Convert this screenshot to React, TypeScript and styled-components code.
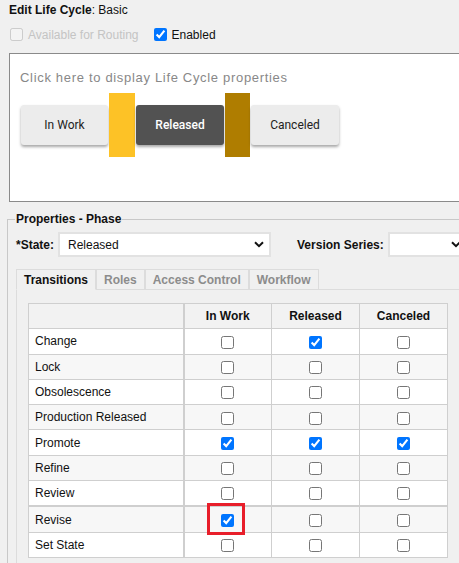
import styled, { createGlobalStyle } from "styled-components";

const GlobalStyle = createGlobalStyle`
  html, body {
    margin: 0;
    padding: 0;
    background: #f0f0f0;
    overflow: hidden;
  }
  body {
    font-family: "Liberation Sans", Arial, sans-serif;
    font-size: 12px;
    color: #111;
  }
`;

const Page = styled.div`
  width: 459px;
  height: 563px;
  overflow: hidden;
`;

const Title = styled.div`
  margin: 3px 0 0 9px;
  line-height: 14px;
  b {
    font-weight: bold;
  }
`;

const OptionsRow = styled.div`
  display: flex;
  align-items: center;
  margin: 10px 0 0 10px;
  height: 15px;
`;

const Check = styled.input.attrs({ type: "checkbox" })`
  width: 13px;
  height: 13px;
  margin: 0;
`;

const OptionLabel = styled.label<{ disabled?: boolean }>`
  display: flex;
  align-items: center;
  gap: 5px;
  margin-right: 15px;
  color: ${(p) => (p.disabled ? "#c4c4c4" : "#111")};
`;

const Panel = styled.div`
  margin: 11px 0 0 9px;
  width: 480px;
  height: 149px;
  background: #fff;
  border: 1px solid #8a8a8a;
  padding: 16px 0 0 10px;
  box-sizing: border-box;
`;

const Hint = styled.div`
  font-size: 13px;
  letter-spacing: 0.68px;
  line-height: 15px;
  color: #888;
`;

const Flow = styled.div`
  display: flex;
  align-items: center;
  margin: 8px 0 0 1px;
  gap: 1px;
`;

const StateButton = styled.div<{ active?: boolean }>`
  width: 88px;
  height: 40px;
  display: flex;
  align-items: center;
  justify-content: center;
  border-radius: 3px;
  font-family: Roboto, "Liberation Sans", sans-serif;
  font-size: 12px;
  font-weight: ${(p) => (p.active ? 500 : 400)};
  background: ${(p) => (p.active ? "#525252" : "#ececec")};
  color: ${(p) => (p.active ? "#fff" : "#222")};
  box-shadow: 0 2px 3px rgba(0, 0, 0, 0.35);
`;

const Connector = styled.div<{ color: string }>`
  width: 26px;
  height: 64px;
  background: ${(p) => p.color};
`;

const Fieldset = styled.fieldset`
  margin: 10px 0 0 7px;
  width: 480px;
  height: 400px;
  border: 1px solid #c8c8c8;
  border-right: none;
  padding: 6px 0 0 8px;
  box-sizing: border-box;
  legend {
    font-weight: bold;
    padding: 0 1px;
    margin-left: -1px;
    line-height: 14px;
  }
`;

const FieldRow = styled.div`
  display: flex;
  align-items: center;
  height: 25px;
  white-space: nowrap;
`;

const FieldLabel = styled.span`
  font-weight: bold;
  margin-right: 4px;
  flex-shrink: 0;
`;

const SelectWrap = styled.div<{ width: number }>`
  position: relative;
  width: ${(p) => p.width}px;
  height: 25px;
  margin-right: 26px;
  flex-shrink: 0;
`;

const Select = styled.select`
  appearance: none;
  width: 100%;
  height: 100%;
  border: 2px solid #e2e2e2;
  background: #fff;
  font-family: "Liberation Sans", Arial, sans-serif;
  font-size: 12px;
  color: #111;
  padding: 0 0 0 8px;
  box-sizing: border-box;
  outline: none;
`;

const Chevron = styled.svg`
  position: absolute;
  right: 7px;
  top: 9px;
  pointer-events: none;
`;

const Tabs = styled.div`
  display: flex;
  margin-top: 12px;
  position: relative;
  z-index: 1;
`;

const Tab = styled.div<{ active?: boolean }>`
  height: 21px;
  display: flex;
  align-items: center;
  padding: 0 7px;
  border: 1px solid #dcdcdc;
  border-bottom-color: ${(p) => (p.active ? "#f0f0f0" : "#dcdcdc")};
  box-sizing: border-box;
  font-weight: bold;
  color: ${(p) => (p.active ? "#111" : "#8c8c8c")};
  background: #f0f0f0;
  margin-bottom: -1px;
`;

const TabPanel = styled.div`
  border-top: 1px solid #dcdcdc;
  border-left: 1px solid #dcdcdc;
  padding: 13px 0 0 11px;
  height: 300px;
`;

const Grid = styled.table`
  border-collapse: collapse;
  width: 420px;
  table-layout: fixed;
  border: 1px solid #c8c8c8;
  th,
  td {
    border: 1px solid #cfcfcf;
    height: 24.3px;
    padding: 0;
  }
  th {
    background: #f2f2f2;
    font-weight: bold;
    text-align: center;
  }
  th:first-child,
  td:first-child {
    border-right: 2px solid #cfcfcf;
  }
`;

const Row = styled.tr<{ shade?: boolean; heavy?: boolean }>`
  background: ${(p) => (p.shade ? "#f7f7f7" : "#fff")};
  td {
    border-top-width: ${(p) => (p.heavy ? "2px" : "1px")};
  }
`;

const NameCell = styled.td`
  padding-left: 6px !important;
`;

const BoxCell = styled.td`
  text-align: center;
  position: relative;
  input {
    vertical-align: middle;
  }
`;

const Highlight = styled.div`
  position: absolute;
  left: 22px;
  top: -4px;
  width: 38px;
  height: 32px;
  border: 3px solid #e81e2a;
  box-sizing: border-box;
  pointer-events: none;
`;

const columns = ["In Work", "Released", "Canceled"];

const rows: { name: string; checks: boolean[] }[] = [
  { name: "Change", checks: [false, true, false] },
  { name: "Lock", checks: [false, false, false] },
  { name: "Obsolescence", checks: [false, false, false] },
  { name: "Production Released", checks: [false, false, false] },
  { name: "Promote", checks: [true, true, true] },
  { name: "Refine", checks: [false, false, false] },
  { name: "Review", checks: [false, false, false] },
  { name: "Revise", checks: [true, false, false] },
  { name: "Set State", checks: [false, false, false] },
];

function ChevronIcon() {
  return (
    <Chevron width="10" height="7" viewBox="0 0 10 7">
      <path d="M1 1.2 L5 5.2 L9 1.2" fill="none" stroke="#111" strokeWidth="2" />
    </Chevron>
  );
}

export default function App() {
  return (
    <Page>
      <GlobalStyle />
      <Title>
        <b>Edit Life Cycle</b>: Basic
      </Title>
      <OptionsRow>
        <OptionLabel disabled>
          <Check disabled />
          Available for Routing
        </OptionLabel>
        <OptionLabel>
          <Check defaultChecked />
          Enabled
        </OptionLabel>
      </OptionsRow>

      <Panel>
        <Hint>Click here to display Life Cycle properties</Hint>
        <Flow>
          <StateButton style={{ width: 87 }}>In Work</StateButton>
          <Connector color="#fdc226" />
          <StateButton active>Released</StateButton>
          <Connector color="#af7d00" style={{ width: 25 }} />
          <StateButton>Canceled</StateButton>
        </Flow>
      </Panel>

      <Fieldset>
        <legend>Properties - Phase</legend>
        <FieldRow>
          <FieldLabel>*State:</FieldLabel>
          <SelectWrap width={213}>
            <Select defaultValue="Released">
              <option>In Work</option>
              <option>Released</option>
              <option>Canceled</option>
            </Select>
            <ChevronIcon />
          </SelectWrap>
          <FieldLabel>Version Series:</FieldLabel>
          <SelectWrap width={80}>
            <Select defaultValue="">
              <option value=""></option>
            </Select>
            <ChevronIcon />
          </SelectWrap>
        </FieldRow>

        <Tabs>
          <Tab active>Transitions</Tab>
          <Tab>Roles</Tab>
          <Tab>Access Control</Tab>
          <Tab>Workflow</Tab>
        </Tabs>
        <TabPanel>
          <Grid>
            <colgroup>
              <col style={{ width: 155 }} />
              <col style={{ width: 88 }} />
              <col style={{ width: 88 }} />
              <col style={{ width: 88 }} />
            </colgroup>
            <thead>
              <tr>
                <th></th>
                {columns.map((c) => (
                  <th key={c}>{c}</th>
                ))}
              </tr>
            </thead>
            <tbody>
              {rows.map((r, i) => (
                <Row key={r.name} shade={i % 2 === 1} heavy={r.name === "Revise"}>
                  <NameCell>{r.name}</NameCell>
                  {r.checks.map((c, j) => (
                    <BoxCell key={j}>
                      <Check defaultChecked={c} />
                      {r.name === "Revise" && j === 0 && <Highlight />}
                    </BoxCell>
                  ))}
                </Row>
              ))}
            </tbody>
          </Grid>
        </TabPanel>
      </Fieldset>
    </Page>
  );
}
